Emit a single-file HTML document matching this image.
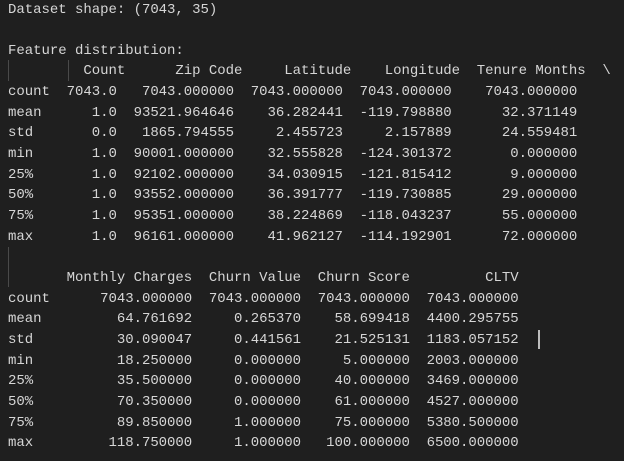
<!DOCTYPE html>
<html><head><meta charset="utf-8"><style>
html,body{margin:0;padding:0;background:#1f1f1f;width:624px;height:461px;overflow:hidden}
pre{position:absolute;left:8px;top:-0.5px;margin:0;font-family:"Liberation Mono",monospace;font-size:14px;line-height:20.65px;color:#d6d6d6;letter-spacing:-0.03px}
.bar{position:absolute;width:1px;background:#4a4a4a}
.cur{position:absolute;width:2px;background:#bdbdbd}
</style></head><body>
<div class="bar" style="left:8px;top:60px;height:21px"></div>
<div class="bar" style="left:68px;top:60px;height:21px"></div>
<div class="bar" style="left:8px;top:247px;height:40px"></div>
<div class="cur" style="left:538px;top:330px;height:19px"></div>
<pre>Dataset shape: (7043, 35)

Feature distribution:
         Count      Zip Code     Latitude    Longitude  Tenure Months  \
count  7043.0   7043.000000  7043.000000  7043.000000    7043.000000
mean      1.0  93521.964646    36.282441  -119.798880      32.371149
std       0.0   1865.794555     2.455723     2.157889      24.559481
min       1.0  90001.000000    32.555828  -124.301372       0.000000
25%       1.0  92102.000000    34.030915  -121.815412       9.000000
50%       1.0  93552.000000    36.391777  -119.730885      29.000000
75%       1.0  95351.000000    38.224869  -118.043237      55.000000
max       1.0  96161.000000    41.962127  -114.192901      72.000000

       Monthly Charges  Churn Value  Churn Score         CLTV
count      7043.000000  7043.000000  7043.000000  7043.000000
mean         64.761692     0.265370    58.699418  4400.295755
std          30.090047     0.441561    21.525131  1183.057152
min          18.250000     0.000000     5.000000  2003.000000
25%          35.500000     0.000000    40.000000  3469.000000
50%          70.350000     0.000000    61.000000  4527.000000
75%          89.850000     1.000000    75.000000  5380.500000
max         118.750000     1.000000   100.000000  6500.000000</pre>
</body></html>
